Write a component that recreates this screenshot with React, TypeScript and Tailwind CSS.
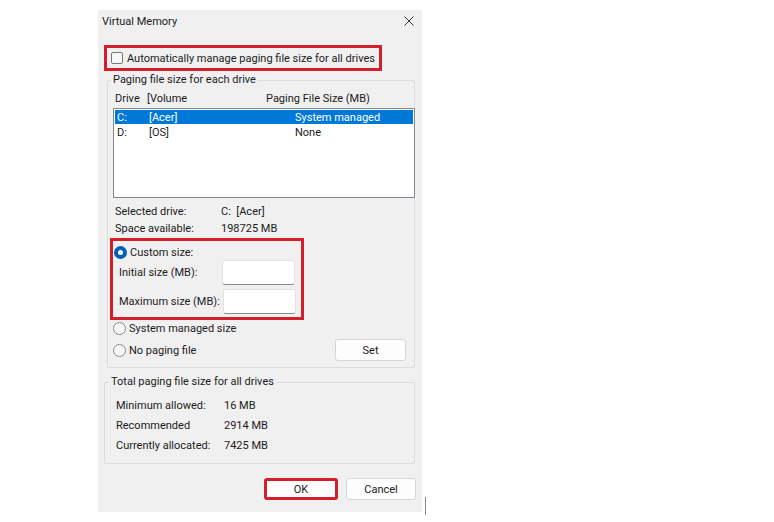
import React from 'react'

const font = { fontFamily: 'Roboto, "Noto Sans", Arial, sans-serif' }

function Radio({ checked }: { checked?: boolean }) {
  return checked ? (
    <span className="flex h-[13px] w-[13px] shrink-0 items-center justify-center rounded-full bg-[#0060b8]">
      <span className="h-[5px] w-[5px] rounded-full bg-white" />
    </span>
  ) : (
    <span className="h-[13px] w-[13px] shrink-0 rounded-full border border-[#8a8a8a] bg-[#f6f6f6]" />
  )
}

function Field() {
  return (
    <div className="h-[25px] w-[73px] rounded-[3px] border border-[#e2e2e2] border-b-[#8b8b8b] bg-white" />
  )
}

function Btn({ label, className }: { label: string; className?: string }) {
  return (
    <div
      className={
        'flex h-[22px] items-center justify-center rounded-[3px] border border-[#d6d6d6] bg-[#fdfdfd] text-[#1b1b1b] ' +
        (className ?? '')
      }
    >
      {label}
    </div>
  )
}

export default function App() {
  return (
    <div className="flex h-[522px] w-[774px] bg-white pl-[98px] pt-[10px]" style={font}>
      {/* 대화상자 */}
      <div className="flex h-[502px] w-[324px] flex-col whitespace-nowrap bg-[#f0f0f0] text-[11px] leading-none text-[#1b1b1b]">
        {/* 타이틀 바 */}
        <div className="flex h-[22px] items-center justify-between pl-[4px] pr-[8px]">
          <span className="pt-[1px]">Virtual Memory</span>
          <svg width="10" height="10" viewBox="0 0 10 10" className="mb-[1px]">
            <path d="M0.5 0.5L9.5 9.5M9.5 0.5L0.5 9.5" stroke="#333" strokeWidth="1" />
          </svg>
        </div>

        {/* 자동 관리 체크박스 */}
        <div className="ml-[6px] mt-[13px] flex h-[26px] w-[278px] items-center gap-[4px] border-[3px] border-[#d21f2b] pl-[4px]">
          <span className="h-[12px] w-[12px] rounded-[2px] border border-[#777] bg-[#f8f8f8]" />
          <span>Automatically manage paging file size for all drives</span>
        </div>

        {/* 드라이브별 그룹 */}
        <div className="relative ml-[9px] mt-[9px] h-[288px] w-[308px] rounded-[2px] border border-[#dcdcdc]">
          <span className="absolute left-[3px] top-[-7px] bg-[#f0f0f0] px-[2px]">Paging file size for each drive</span>
          <div className="flex pl-[7px] pt-[12px]">
            <span className="w-[32px]">Drive</span>
            <span className="w-[119px]">[Volume</span>
            <span>Paging File Size (MB)</span>
          </div>
          <div className="ml-[5px] mt-[4px] h-[90px] w-[302px] border border-[#828790] bg-white p-[1px]">
            <div className="flex h-[14px] items-center bg-[#0078d7] pl-[2px] text-white">
              <span className="w-[32px]">C:</span>
              <span className="w-[146px]">[Acer]</span>
              <span>System managed</span>
            </div>
            <div className="flex h-[16px] items-center pl-[2px]">
              <span className="w-[32px]">D:</span>
              <span className="w-[146px]">[OS]</span>
              <span>None</span>
            </div>
          </div>
          <div className="mt-[7px] flex flex-col gap-[5px] pl-[7px]">
            <div className="flex h-[12px] items-center">
              <span className="w-[106px]">Selected drive:</span>
              <span>C:&nbsp; [Acer]</span>
            </div>
            <div className="flex h-[12px] items-center">
              <span className="w-[106px]">Space available:</span>
              <span>198725 MB</span>
            </div>
          </div>

          {/* 사용자 지정 크기 */}
          <div className="ml-[2px] mt-[4px] flex h-[82px] w-[194px] flex-col border-[3px] border-[#d21f2b] pl-[1px]">
            <div className="mt-[5px] flex items-center gap-[3px]">
              <Radio checked />
              <span>Custom size:</span>
            </div>
            <div className="mt-[1px] flex items-center">
              <span className="w-[108px] pl-[5px]">Initial size (MB):</span>
              <Field />
            </div>
            <div className="mt-[4px] flex items-center">
              <span className="w-[109px] pl-[5px]">Maximum size (MB):</span>
              <Field />
            </div>
          </div>
          <div className="mt-[2px] flex items-center gap-[3px] pl-[5px]">
            <Radio />
            <span>System managed size</span>
          </div>
          <div className="mt-[4px] flex items-center pl-[5px] pr-[8px]">
            <Radio />
            <span className="ml-[3px] flex-1">No paging file</span>
            <Btn label="Set" className="w-[71px]" />
          </div>
        </div>

        {/* 전체 드라이브 합계 */}
        <div className="relative ml-[6px] mt-[14px] h-[82px] w-[311px] rounded-[2px] border border-[#dcdcdc]">
          <span className="absolute left-[4px] top-[-7px] bg-[#f0f0f0] px-[2px]">Total paging file size for all drives</span>
          <div className="flex flex-col gap-[8px] pl-[11px] pt-[16px]">
            <div className="flex h-[12px] items-center">
              <span className="w-[108px]">Minimum allowed:</span>
              <span>16 MB</span>
            </div>
            <div className="flex h-[12px] items-center">
              <span className="w-[108px]">Recommended</span>
              <span>2914 MB</span>
            </div>
            <div className="flex h-[12px] items-center">
              <span className="w-[108px]">Currently allocated:</span>
              <span>7425 MB</span>
            </div>
          </div>
        </div>

        {/* 확인 / 취소 */}
        <div className="mt-[14px] flex gap-[8px] pl-[166px]">
          <Btn label="OK" className="w-[74px] border-[3px] border-[#d21f2b]" />
          <Btn label="Cancel" className="w-[70px]" />
        </div>
      </div>
      <div className="mb-[7px] ml-[3px] h-[18px] w-px self-end bg-[#8a8a8a]" />
    </div>
  )
}
